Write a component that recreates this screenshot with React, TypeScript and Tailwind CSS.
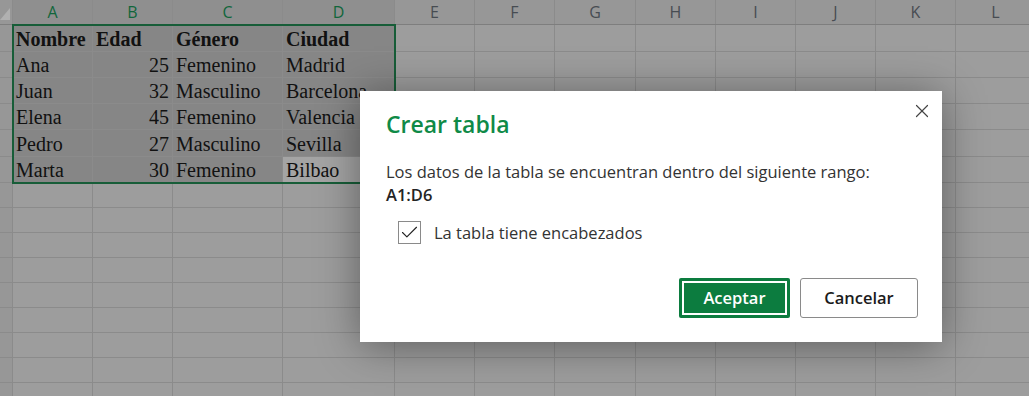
import { X, Check } from "lucide-react";

const COLS = [
  { k: "A", w: "w-[80px]", sel: true },
  { k: "B", w: "w-[80px]", sel: true },
  { k: "C", w: "w-[110px]", sel: true },
  { k: "D", w: "w-[112px]", sel: true },
  { k: "E", w: "w-[80px]", sel: false },
  { k: "F", w: "w-[80px]", sel: false },
  { k: "G", w: "w-[81px]", sel: false },
  { k: "H", w: "w-[80px]", sel: false },
  { k: "I", w: "w-[80px]", sel: false },
  { k: "J", w: "w-[80px]", sel: false },
  { k: "K", w: "w-[80px]", sel: false },
  { k: "L", w: "w-[80px]", sel: false },
];

const DATA: { cells: string[]; h: string; head?: boolean }[] = [
  { cells: ["Nombre", "Edad", "Género", "Ciudad"], h: "h-[27px]", head: true },
  { cells: ["Ana", "25", "Femenino", "Madrid"], h: "h-[26px]" },
  { cells: ["Juan", "32", "Masculino", "Barcelona"], h: "h-[26px]" },
  { cells: ["Elena", "45", "Femenino", "Valencia"], h: "h-[26px]" },
  { cells: ["Pedro", "27", "Masculino", "Sevilla"], h: "h-[27px]" },
  { cells: ["Marta", "30", "Femenino", "Bilbao"], h: "h-[26px]" },
];

const EMPTY_ROWS = Array.from({ length: 9 });

function Sheet() {
  return (
    <div className="relative bg-[#9d9d9d] font-['Liberation_Serif',serif] text-[20px] leading-[22px] text-[#111]">
      {/* column headers */}
      <div className="flex h-[25px] bg-[#979797] border-b border-[#7e7e7e]">
        <div className="w-[13px] shrink-0 border-r border-[#8b8b8b] relative">
          <svg width="11" height="14" viewBox="0 0 11 14" className="absolute left-0 top-[6px]">
            <polygon points="0,14 10,14 10,2" fill="#b0b0b0" />
          </svg>
        </div>
        {COLS.map(c => (
          <div
            key={c.k}
            className={`${c.w} shrink-0 border-r border-[#8b8b8b] flex items-center justify-center font-['Open_Sans',sans-serif] text-[16px] leading-[20px] ${c.sel ? "bg-[#8f8f8f] text-[#11663b]" : "text-[#474c52]"}`}
          >
            {c.k}
          </div>
        ))}
      </div>

      {/* data rows */}
      {DATA.map((r, i) => (
        <div key={i} className={`flex ${r.h}`}>
          <div className="w-[13px] shrink-0 border-r border-b border-[#8b8b8b] bg-[#979797]" />
          {COLS.map((c, j) => {
            const v = r.cells[j];
            const active = i === 5 && j === 3;
            const inSel = j < 4;
            const num = !r.head && j === 1;
            return (
              <div
                key={c.k}
                className={`${c.w} shrink-0 border-r border-b border-[#8b8b8b] flex items-end pb-[1px] whitespace-nowrap ${active ? "bg-[#a4a4a4]" : inSel ? "bg-[#868686]" : ""} ${num ? "justify-end pr-[3px]" : "pl-[3px]"} ${r.head ? "font-bold" : ""}`}
              >
                {v}
              </div>
            );
          })}
        </div>
      ))}

      {EMPTY_ROWS.map((_, i) => (
        <div key={i} className="flex h-[25px]">
          <div className="w-[13px] shrink-0 border-r border-b border-[#8b8b8b] bg-[#979797]" />
          {COLS.map(c => (
            <div key={c.k} className={`${c.w} shrink-0 border-r border-b border-[#8b8b8b]`} />
          ))}
        </div>
      ))}

      {/* selection border A1:D6 */}
      <div className="absolute left-[12px] top-[24px] w-[384px] h-[160px] border-2 border-[#175d38] pointer-events-none" />
    </div>
  );
}

function Dialog() {
  return (
    <div className="absolute left-[360px] top-[91px] w-[582px] h-[251px] bg-white shadow-[0_4px_40px_rgba(0,0,0,0.4)] px-[26px] pt-[17px] font-['Open_Sans',sans-serif] text-[#242424]">
      <button className="absolute right-[9px] top-[9px] w-[22px] h-[22px] flex items-center justify-center text-[#444]">
        <X className="w-[22px] h-[22px]" strokeWidth={1.3} />
      </button>
      <h2 className="text-[23px] leading-[32px] font-semibold text-[#0f8a47]">Crear tabla</h2>
      <p className="mt-[20px] text-[16.5px] leading-[23px] text-[#333]">
        Los datos de la tabla se encuentran dentro del siguiente rango:
      </p>
      <p className="text-[16.5px] leading-[23px] font-semibold text-[#242424]">A1:D6</p>
      <label className="mt-[15px] ml-[12px] flex items-center gap-[13px]">
        <span className="w-[23px] h-[23px] border border-[#8a8a8a] flex items-center justify-center bg-white">
          <Check className="w-[21px] h-[21px] text-[#222]" strokeWidth={1.3} />
        </span>
        <span className="text-[16.5px] leading-[23px] text-[#333]">La tabla tiene encabezados</span>
      </label>
      <div className="absolute right-[24px] bottom-[24px] flex gap-[10px]">
        <button className="w-[111px] h-[40px] rounded-[2px] bg-[#0c7c3f] p-[3px]">
          <span className="w-full h-full border-2 border-white flex items-center justify-center text-white font-semibold text-[16.5px]">
            Aceptar
          </span>
        </button>
        <button className="w-[118px] h-[40px] rounded-[3px] border border-[#8a8a8a] bg-white text-[#1b1b1b] font-semibold text-[16.5px]">
          Cancelar
        </button>
      </div>
    </div>
  );
}

export default function App() {
  return (
    <div className="relative w-[1029px] h-[396px] overflow-hidden bg-[#9d9d9d]">
      <Sheet />
      <Dialog />
    </div>
  );
}
